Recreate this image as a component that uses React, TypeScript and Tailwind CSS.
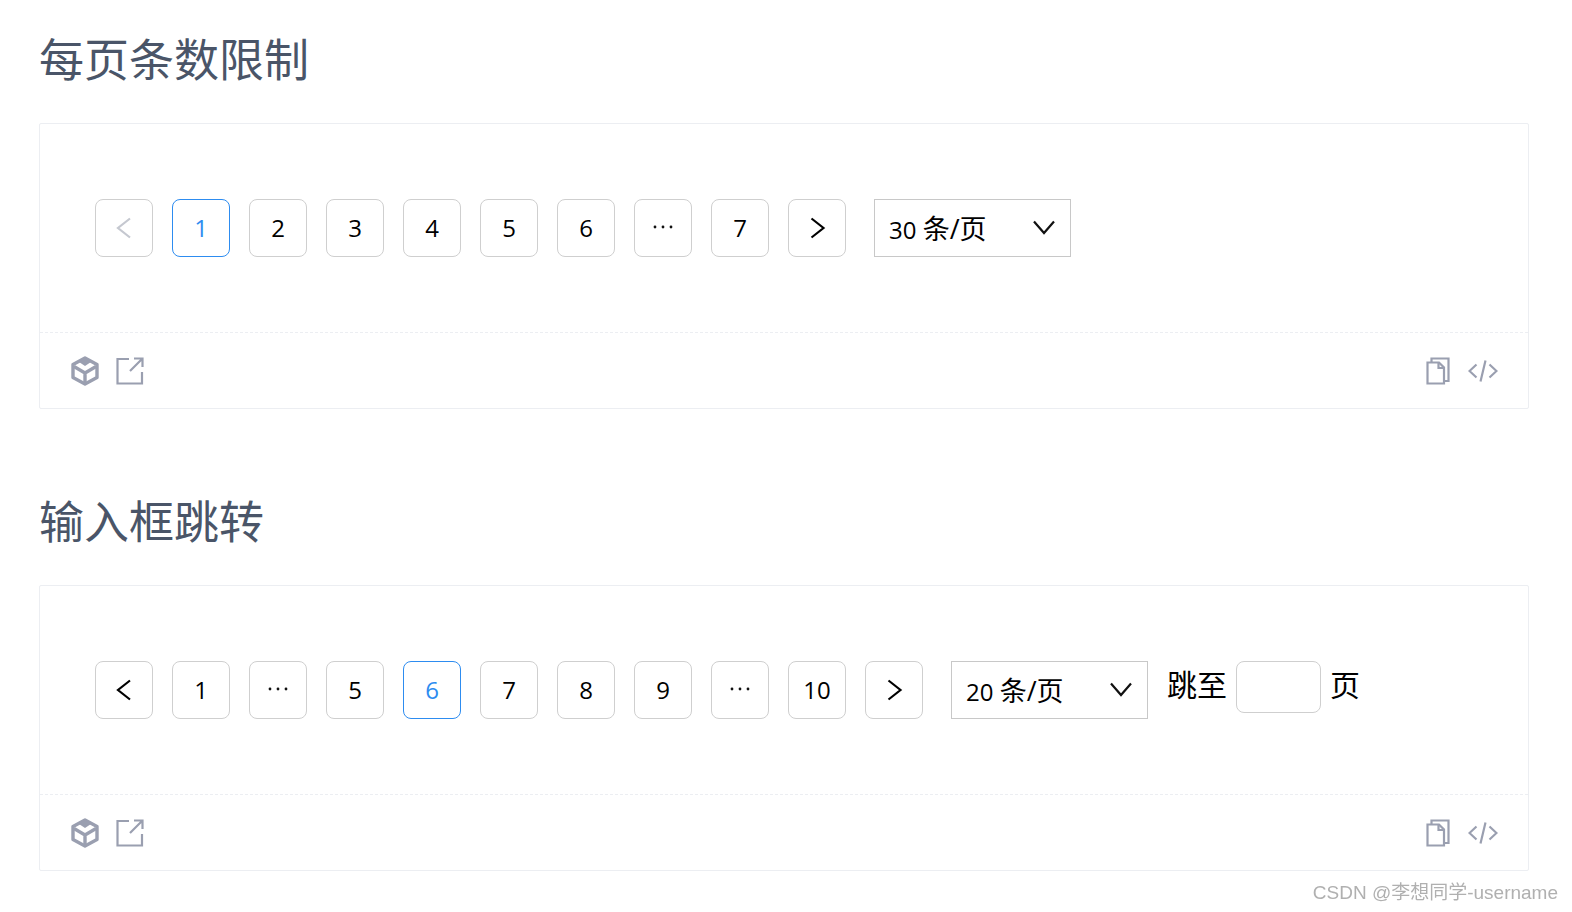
const font = "[font-family:'Open_Sans','Noto_Sans_CJK_SC',sans-serif]";

type Item = { label?: string; kind?: "prev" | "next"; active?: boolean; disabled?: boolean };

function Chevron({ dir, disabled }: { dir: "left" | "right"; disabled?: boolean }) {
  return (
    <svg width="24" height="24" viewBox="0 0 24 24" fill="none" stroke={disabled ? "#c5c8d0" : "#000"} strokeWidth="2.2">
      {dir === "left" ? <path d="M18 2.5 6 12 18 21.5" /> : <path d="M6.5 2.5 18.5 12 6.5 21.5" />}
    </svg>
  );
}

function PageButton({ item }: { item: Item }) {
  const border = item.active ? "border-[#2d8cf0] text-[#2d8cf0]" : "border-[#cfcfcf] text-black";
  return (
    <div className={`w-[58px] h-[58px] rounded-[8px] border bg-white flex items-center justify-center text-[24px] ${border}`}>
      {item.kind === "prev" && <Chevron dir="left" disabled={item.disabled} />}
      {item.kind === "next" && <Chevron dir="right" />}
      {item.label === "…" ? (
        <svg width="22" height="6" viewBox="0 0 22 6" fill="#111" className="mb-[3px]">
          <circle cx="3" cy="3" r="1.4" />
          <circle cx="11" cy="3" r="1.4" />
          <circle cx="19" cy="3" r="1.4" />
        </svg>
      ) : (
        item.label
      )}
    </div>
  );
}

function SizeSelect({ count }: { count: number }) {
  return (
    <div className="ml-[9px] w-[197px] h-[58px] border border-[#c8c8c8] bg-white flex items-center justify-between pl-[14px] pr-[14px] text-[24px] text-black">
      <span className="pt-[3px]">
        {count} <span className="text-[27px] leading-[30px]">条/页</span>
      </span>
      <svg width="24" height="16" viewBox="0 0 24 16" fill="none" stroke="#111" strokeWidth="2.2" className="mb-[2px]">
        <path d="M2 2.5 12 14 22 2.5" />
      </svg>
    </div>
  );
}

function BoxIcon() {
  return (
    <svg width="28" height="30" viewBox="0 0 28 30" fill="none" stroke="#9a9fb0" strokeWidth="3.4" strokeLinejoin="round">
      <path d="M14 2 26 8.5V21.5L14 28 2 21.5V8.5Z" />
      <path d="M3 10.5 14 17 25 10.5M14 17V27" />
      <path d="M14 2 20 6 14 10 8 6Z" fill="#9a9fb0" stroke="none" />
    </svg>
  );
}

function OpenIcon() {
  return (
    <svg width="28" height="28" viewBox="0 0 28 28" fill="none" stroke="#9a9fb0" strokeWidth="2.2">
      <path d="M13 2H1.5V26.5H26V15" />
      <path d="M14 14 26 2M18 1.5H26.5V10" />
    </svg>
  );
}

function CopyIcon() {
  return (
    <svg width="24" height="28" viewBox="0 0 24 28" fill="none" stroke="#9a9fb0" strokeWidth="2.2">
      <path d="M5.5 5V1.5H22.5V24H18" />
      <path d="M1.5 5.5H13L18 10.5V26.5H1.5Z" />
      <path d="M12.5 5.5V11H18" />
    </svg>
  );
}

function CodeIcon() {
  return (
    <svg width="30" height="24" viewBox="0 0 30 24" fill="none" stroke="#9a9fb0" strokeWidth="2.2">
      <path d="M8.5 5.5 1.5 12l7 6.5M21.5 5.5l7 6.5-7 6.5M17.5 1.5 12.5 22.5" />
    </svg>
  );
}

function Demo({ title, children, first }: { title: string; children: React.ReactNode; first?: boolean }) {
  return (
    <section className={first ? "pt-[30px]" : "pt-[83px]"}>
      <h2 className="text-[45px] leading-[60px] font-normal text-[#4a5568] mb-[33px]">{title}</h2>
      <div className="border border-[#eceef2] bg-white rounded-[2px]">
        <div className="h-[208px] pl-[55px] flex items-center gap-[19px]">{children}</div>
        <div className="h-[76px] border-t border-dashed border-[#eceef2] pl-[31px] pr-[30px] flex items-center justify-between">
          <div className="flex items-center gap-[17px]">
            <BoxIcon />
            <OpenIcon />
          </div>
          <div className="flex items-center gap-[18px]">
            <CopyIcon />
            <CodeIcon />
          </div>
        </div>
      </div>
    </section>
  );
}

const firstPager: Item[] = [
  { kind: "prev", disabled: true },
  { label: "1", active: true },
  { label: "2" },
  { label: "3" },
  { label: "4" },
  { label: "5" },
  { label: "6" },
  { label: "…" },
  { label: "7" },
  { kind: "next" },
];

const secondPager: Item[] = [
  { kind: "prev" },
  { label: "1" },
  { label: "…" },
  { label: "5" },
  { label: "6", active: true },
  { label: "7" },
  { label: "8" },
  { label: "9" },
  { label: "…" },
  { label: "10" },
  { kind: "next" },
];

export default function App() {
  return (
    <div className={`relative h-[912px] overflow-hidden bg-white pl-[39px] pr-[43px] ${font}`}>
      <Demo title="每页条数限制" first>
        {firstPager.map((item, i) => (
          <PageButton key={i} item={item} />
        ))}
        <SizeSelect count={30} />
      </Demo>
      <Demo title="输入框跳转">
        {secondPager.map((item, i) => (
          <PageButton key={i} item={item} />
        ))}
        <SizeSelect count={20} />
        <div className="flex items-start h-[58px] text-[30px] leading-[48px] text-black">
          <span>跳至</span>
          <div className="ml-[9px] mr-[9px] w-[85px] h-[52px] rounded-[8px] border border-[#cfcfcf] bg-white" />
          <span>页</span>
        </div>
      </Demo>
      {/* csdn watermark */}
      <div className="absolute right-[14px] bottom-[6px] text-[19px] leading-[26px] text-[#b0b0b0] blur-[0.3px] [font-family:'Liberation_Sans','Noto_Sans_CJK_SC',sans-serif]">
        CSDN @李想同学-username
      </div>
    </div>
  );
}
